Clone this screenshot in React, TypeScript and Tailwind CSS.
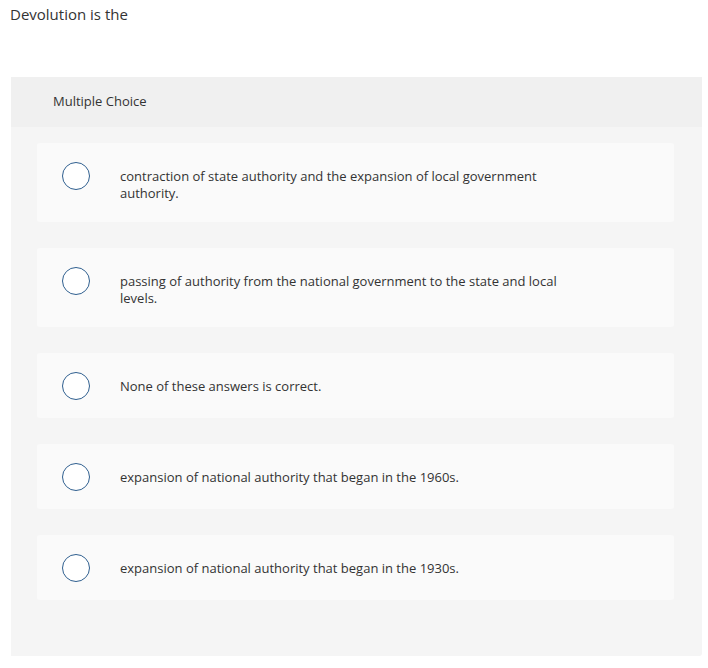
import React from "react";

const options = [
  "contraction of state authority and the expansion of local government authority.",
  "passing of authority from the national government to the state and local levels.",
  "None of these answers is correct.",
  "expansion of national authority that began in the 1960s.",
  "expansion of national authority that began in the 1930s.",
];

export default function App() {
  return (
    <div className="w-[708px] h-[668px] bg-white text-[#333] font-['Open_Sans',sans-serif]">
      <div className="pl-[10px] pt-[4px] text-[15px] leading-[20px]">Devolution is the</div>
      <div className="mt-[53px] ml-[11px] w-[691px] h-[579px] bg-[#f5f5f5] rounded-br-[3px]">
        <div className="h-[50px] bg-[#f0f0f0] pl-[42px] flex items-center text-[13px]">
          Multiple Choice
        </div>
        <div className="pt-[16px] pl-[26px] flex flex-col gap-[26px]">
          {options.map((o, i) => (
            <div
              key={i}
              className="w-[637px] bg-[#fafafa] rounded-[3px] flex items-start pl-[25px] pt-[19px]"
            >
              <div className="w-[28px] h-[28px] mb-[18px] rounded-full border-[1.5px] border-[#2f5f8f] bg-white shrink-0" />
              <div className="ml-[30px] mt-[6px] mb-[20px] w-[440px] text-[13px] leading-[17px]">{o}</div>
            </div>
          ))}
        </div>
      </div>
    </div>
  );
}
